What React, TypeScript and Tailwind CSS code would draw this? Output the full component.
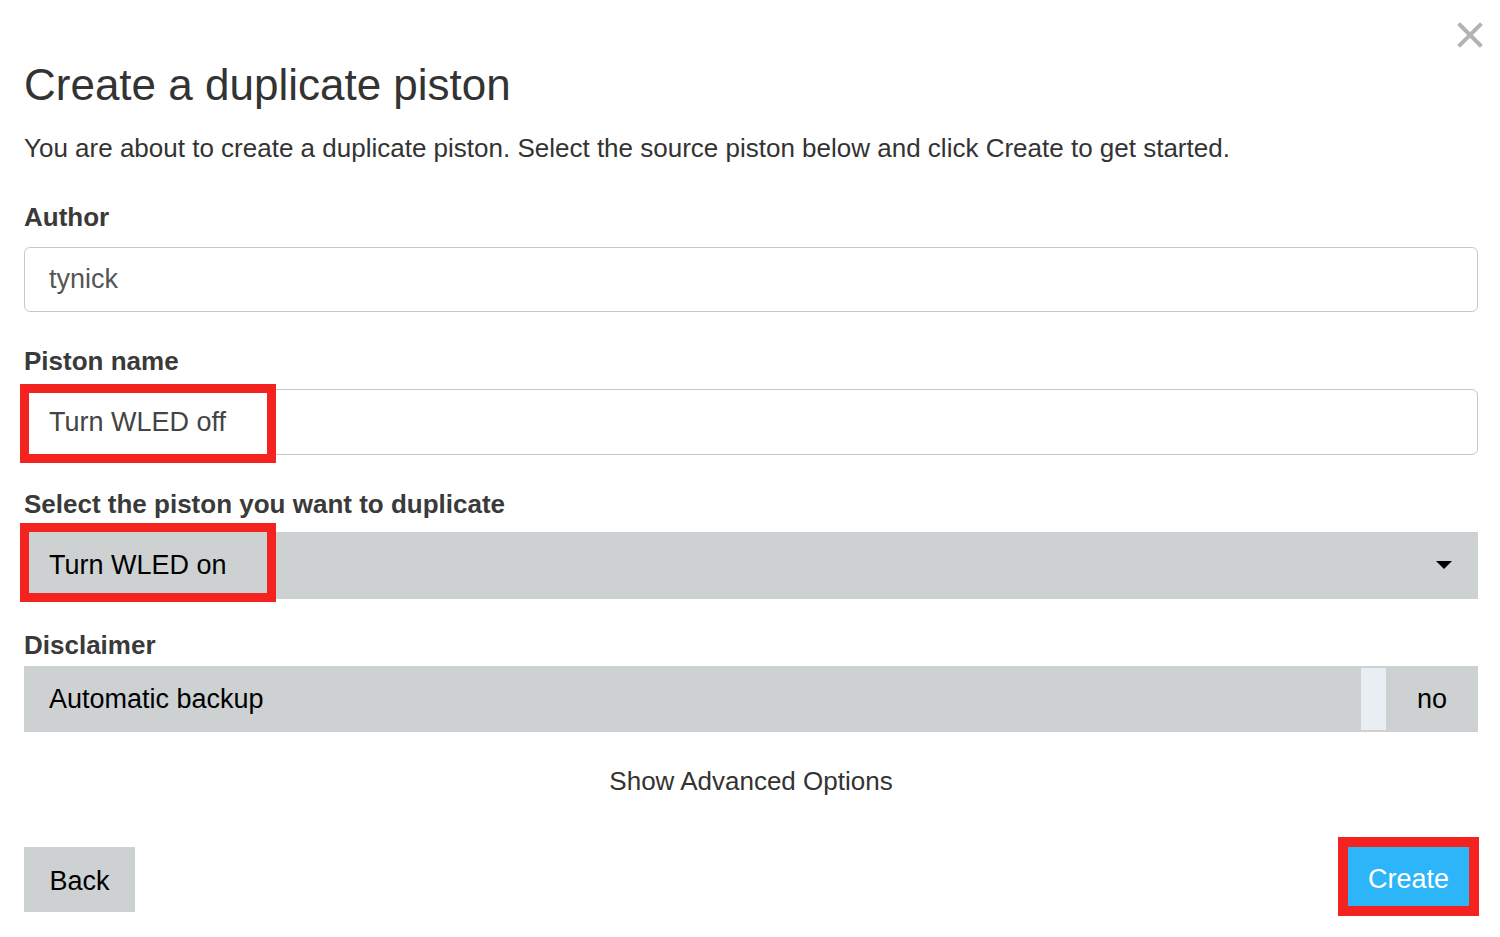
export default function App() {
  return (
    <main className="min-h-screen bg-white font-['Liberation_Sans',Arial,sans-serif] text-[#333]">
      <div className="relative pl-[24px] pr-[22px] pt-[61px] pb-[21px]">
        {/* close button */}
        <button className="absolute top-[21px] right-[17px] w-[27px] h-[27px] flex items-center justify-center">
          <svg width="26" height="26" viewBox="0 0 26 26">
            <path d="M3 3 L23 23 M23 3 L3 23" stroke="#b3b3b3" strokeWidth="4" strokeLinecap="square" />
          </svg>
        </button>

        <h1 className="text-[44px] leading-[48px] font-light text-[#333]">Create a duplicate piston</h1>
        <p className="mt-[24px] text-[26px] leading-[30px] text-[#333]">
          You are about to create a duplicate piston. Select the source piston below and click Create to get started.
        </p>

        {/* Author */}
        <label className="block mt-[39px] text-[26px] leading-[30px] font-bold text-[#3a3a3a]">Author</label>
        <div className="mt-[15px] h-[65px] border border-[#c8c8c8] rounded-[6px] flex items-center pl-[24px] text-[27px] text-[#555]">
          tynick
        </div>

        {/* Piston name */}
        <label className="block mt-[34px] text-[26px] leading-[30px] font-bold text-[#3a3a3a]">Piston name</label>
        <div className="relative mt-[13px] h-[66px] border border-[#c8c8c8] rounded-[6px] flex items-center pl-[24px] text-[27px] text-[#444]">
          Turn WLED off
          <div className="absolute -left-[5px] -top-[6px] w-[256px] h-[79px] border-[9px] border-[#f5231f] pointer-events-none" />
        </div>

        {/* Select */}
        <label className="block mt-[34px] text-[26px] leading-[30px] font-bold text-[#3a3a3a]">Select the piston you want to duplicate</label>
        <div className="relative mt-[13px] h-[67px] bg-[#cdd1d2] flex items-center justify-between pl-[25px] pr-[26px] text-[27px] text-black">
          <span>Turn WLED on</span>
          <svg width="16" height="9" viewBox="0 0 16 9">
            <path d="M0 0 H16 L8 8 Z" fill="#000" />
          </svg>
          <div className="absolute -left-[4px] -top-[9px] w-[256px] h-[79px] border-[9px] border-[#f5231f] pointer-events-none" />
        </div>

        {/* Disclaimer */}
        <label className="block mt-[31px] text-[26px] leading-[30px] font-bold text-[#3a3a3a]">Disclaimer</label>
        <div className="mt-[6px] h-[66px] bg-[#cdd1d2] flex items-stretch text-[27px] text-black">
          <div className="flex-1 flex items-center pl-[25px]">Automatic backup</div>
          <div className="w-[25px] my-[2px] bg-[#e9eef2]" />
          <div className="w-[92px] flex items-center justify-center">no</div>
        </div>

        <div className="mt-[34px] text-center text-[26px] leading-[30px] text-[#333]">Show Advanced Options</div>

        {/* buttons */}
        <div className="mt-[51px] flex items-start justify-between">
          <button className="h-[65px] w-[111px] pt-[3px] bg-[#cdd1d2] text-[27px] text-black">Back</button>
          <div className="-mt-[10px] -mr-[1px] w-[141px] h-[79px] border-[10px] border-[#f5231f]">
            <button className="w-full h-full pt-[6px] bg-[#2db5f9] text-[27px] text-white">Create</button>
          </div>
        </div>
      </div>
    </main>
  )
}
